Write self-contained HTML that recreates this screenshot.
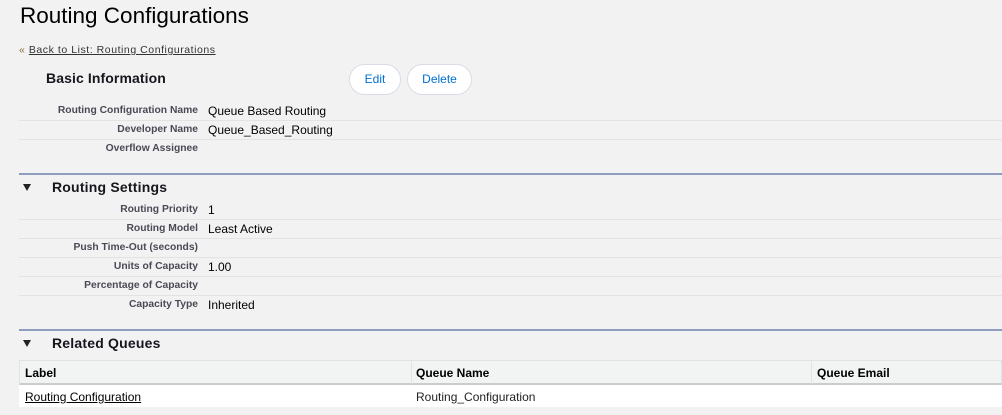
<!DOCTYPE html>
<html><head><style>
*{margin:0;padding:0;box-sizing:border-box}
body{width:1002px;height:415px;background:#f2f2f2;font-family:"Liberation Sans",Arial,sans-serif;position:relative;overflow:hidden;color:#000}
.a{position:absolute;white-space:nowrap}
.lbl{position:absolute;right:804px;font-size:10.3px;font-weight:bold;color:#4a4a56;text-align:right}
.val{position:absolute;left:208px;font-size:12px}
.sep{position:absolute;left:19px;right:0;height:1px;background:#e3e3e3}
.sec{position:absolute;left:19px;right:0;height:2px;background:#8e9dbe}
.btn{position:absolute;top:64px;height:31px;border:1px solid #d8dde6;border-radius:16px;background:#fff;color:#0070d2;font-size:12px;text-align:center;line-height:29px}
.tri{position:absolute;left:23px;width:0;height:0;border-left:4.5px solid transparent;border-right:4.5px solid transparent;border-top:7px solid #222}
.h2{position:absolute;left:52px;font-size:14px;font-weight:bold;color:#16161d;letter-spacing:0.2px}
</style></head><body>
<div class="a" style="left:20px;top:3px;font-size:22.5px;color:#000">Routing Configurations</div>
<div class="a" style="left:19px;top:44px;font-size:10.5px;color:#333;letter-spacing:0.55px"><span style="color:#8a6d3b">«</span> <span style="text-decoration:underline">Back to List: Routing Configurations</span></div>
<div class="a" style="left:46px;top:70px;font-size:14px;font-weight:bold;color:#16161d;letter-spacing:0.1px">Basic Information</div>
<div class="btn" style="left:349px;width:52px">Edit</div>
<div class="btn" style="left:407px;width:65px">Delete</div>

<div class="lbl" style="top:105px">Routing Configuration Name</div><div class="val" style="top:104px">Queue Based Routing</div>
<div class="sep" style="top:120px"></div>
<div class="lbl" style="top:124px">Developer Name</div><div class="val" style="top:123px">Queue_Based_Routing</div>
<div class="sep" style="top:139px"></div>
<div class="lbl" style="top:143px">Overflow Assignee</div>

<div class="sec" style="top:173px"></div>
<div class="tri" style="top:184px"></div>
<div class="h2" style="top:179px">Routing Settings</div>
<div class="lbl" style="top:204px">Routing Priority</div><div class="val" style="top:203px">1</div>
<div class="sep" style="top:219px"></div>
<div class="lbl" style="top:223px">Routing Model</div><div class="val" style="top:222px">Least Active</div>
<div class="sep" style="top:238px"></div>
<div class="lbl" style="top:242px">Push Time-Out (seconds)</div>
<div class="sep" style="top:257px"></div>
<div class="lbl" style="top:261px">Units of Capacity</div><div class="val" style="top:260px">1.00</div>
<div class="sep" style="top:276px"></div>
<div class="lbl" style="top:280px">Percentage of Capacity</div>
<div class="sep" style="top:295px"></div>
<div class="lbl" style="top:299px">Capacity Type</div><div class="val" style="top:298px">Inherited</div>

<div class="sec" style="top:329px"></div>
<div class="tri" style="top:340px"></div>
<div class="h2" style="top:335px">Related Queues</div>

<div class="a" style="left:19px;top:360px;width:983px;height:25px;background:#f2f3f3;border:1px solid #e0e3e5;border-bottom:2px solid #ccc"></div>
<div class="a" style="left:411px;top:361px;width:1px;height:23px;background:#e0e3e5"></div>
<div class="a" style="left:811px;top:361px;width:1px;height:23px;background:#e0e3e5"></div>
<div class="a" style="left:25px;top:366px;font-size:12px;font-weight:bold">Label</div>
<div class="a" style="left:416px;top:366px;font-size:12px;font-weight:bold">Queue Name</div>
<div class="a" style="left:817px;top:366px;font-size:12px;font-weight:bold">Queue Email</div>
<div class="a" style="left:19px;top:385px;width:983px;height:22px;background:#fff"></div>
<div class="a" style="left:25px;top:390px;font-size:12px;text-decoration:underline">Routing Configuration</div>
<div class="a" style="left:416px;top:390px;font-size:12px;color:#222">Routing_Configuration</div>
</body></html>
